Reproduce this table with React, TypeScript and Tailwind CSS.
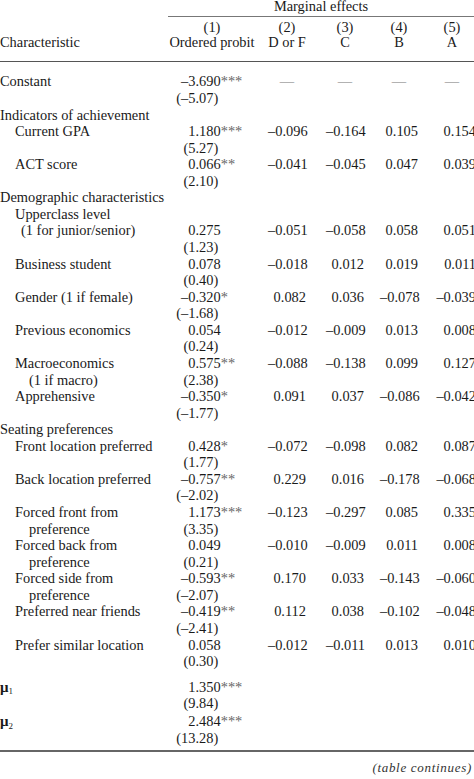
import React from 'react';

type Line = {
  label?: React.ReactNode;
  pad?: string;
  c1?: string;
  m?: string[];
  top?: string;
};

const L1 = 'pl-[15px]';
const L2 = 'pl-[29px]';

const lines: Line[] = [
  { label: 'Constant', c1: '–3.690***', m: ['—', '—', '—', '—'] },
  { c1: '(–5.07)' },
  { label: 'Indicators of achievement' },
  { label: 'Current GPA', pad: L1, c1: '1.180***', m: ['–0.096', '–0.164', '0.105', '0.154'] },
  { c1: '(5.27)' },
  { label: 'ACT score', pad: L1, c1: '0.066**', m: ['–0.041', '–0.045', '0.047', '0.039'] },
  { c1: '(2.10)' },
  { label: 'Demographic characteristics' },
  { label: 'Upperclass level', pad: L1 },
  { label: '(1 for junior/senior)', pad: 'pl-[21px]', c1: '0.275', m: ['–0.051', '–0.058', '0.058', '0.051'] },
  { c1: '(1.23)' },
  { label: 'Business student', pad: L1, c1: '0.078', m: ['–0.018', '0.012', '0.019', '0.011'] },
  { c1: '(0.40)' },
  { label: 'Gender (1 if female)', pad: L1, c1: '–0.320*', m: ['0.082', '0.036', '–0.078', '–0.039'] },
  { c1: '(–1.68)' },
  { label: 'Previous economics', pad: L1, c1: '0.054', m: ['–0.012', '–0.009', '0.013', '0.008'] },
  { c1: '(0.24)' },
  { label: 'Macroeconomics', pad: L1, c1: '0.575**', m: ['–0.088', '–0.138', '0.099', '0.127'] },
  { label: '(1 if macro)', pad: L2, c1: '(2.38)' },
  { label: 'Apprehensive', pad: L1, c1: '–0.350*', m: ['0.091', '0.037', '–0.086', '–0.042'] },
  { c1: '(–1.77)' },
  { label: 'Seating preferences' },
  { label: 'Front location preferred', pad: L1, c1: '0.428*', m: ['–0.072', '–0.098', '0.082', '0.087'] },
  { c1: '(1.77)' },
  { label: 'Back location preferred', pad: L1, c1: '–0.757**', m: ['0.229', '0.016', '–0.178', '–0.068'] },
  { c1: '(–2.02)' },
  { label: 'Forced front from', pad: L1, c1: '1.173***', m: ['–0.123', '–0.297', '0.085', '0.335'] },
  { label: 'preference', pad: L2, c1: '(3.35)' },
  { label: 'Forced back from', pad: L1, c1: '0.049', m: ['–0.010', '–0.009', '0.011', '0.008'] },
  { label: 'preference', pad: L2, c1: '(0.21)' },
  { label: 'Forced side from', pad: L1, c1: '–0.593**', m: ['0.170', '0.033', '–0.143', '–0.060'] },
  { label: 'preference', pad: L2, c1: '(–2.07)' },
  { label: 'Preferred near friends', pad: L1, c1: '–0.419**', m: ['0.112', '0.038', '–0.102', '–0.048'] },
  { c1: '(–2.41)' },
  { label: 'Prefer similar location', pad: L1, c1: '0.058', m: ['–0.012', '–0.011', '0.013', '0.010'] },
  { c1: '(0.30)' },
  {
    label: (
      <>
        <span className="font-bold text-[15px]">μ</span>
        <sub className="text-[9px]">1</sub>
      </>
    ),
    c1: '1.350***',
    top: 'mt-[9px]',
  },
  { c1: '(9.84)' },
  {
    label: (
      <>
        <span className="font-bold text-[15px]">μ</span>
        <sub className="text-[9px]">2</sub>
      </>
    ),
    c1: '2.484***',
    top: 'mt-[1.5px]',
  },
  { c1: '(13.28)' },
];

// column boxes for the four marginal-effect columns
const cols = ['ml-[12px] w-[38px]', 'ml-[20px] w-[38px]', 'ml-[16px] w-[38px]', 'ml-[10px] w-[48px]'];

const Coef = ({ v }: { v?: string }) => {
  if (!v) return null;
  const i = v.indexOf('.');
  const head = v.slice(0, i);
  const tail = v.slice(i);
  const stars = tail.replace(/[^*]/g, '');
  const body = tail.replace(/\*/g, '');
  return (
    <>
      <span className="inline-block w-[27.5px] text-right">{head}</span>
      <span>{body}</span>
      <span className="text-[#666]">{stars}</span>
    </>
  );
};

export default function App() {
  return (
    <div className="w-[474px] h-[779px] overflow-hidden bg-white text-[#1a1a1a] text-[14.4px] font-['Liberation_Serif','Times_New_Roman',serif]">
      <div className="w-[476px] -mt-[2.2px]">
        {/* header */}
        <div className="flex">
          <div className="w-[168px] shrink-0" />
          <div className="flex-1 flex flex-col">
            <div className="leading-[16.6px] text-center pr-[2px]">Marginal effects</div>
            <div className="mt-[1.6px] h-px bg-[#777]" />
          </div>
        </div>
        <div className="flex mt-[2.6px] leading-[15.5px]">
          <div className="w-[168px] shrink-0 flex flex-col justify-end">Characteristic</div>
          <div className="w-[88px] shrink-0 text-center flex flex-col">
            <span>(1)</span>
            <span className="whitespace-nowrap">Ordered probit</span>
          </div>
          {[
            ['(2)', 'D or F'],
            ['(3)', 'C'],
            ['(4)', 'B'],
            ['(5)', 'A'],
          ].map((h, k) => (
            <div key={k} className={`${cols[k]} shrink-0 text-center flex flex-col whitespace-nowrap`}>
              <span>{h[0]}</span>
              <span>{h[1]}</span>
            </div>
          ))}
        </div>
        <div className="mt-[10px] h-[1.5px] w-[474px] bg-[#555]" />

        {/* body */}
        <div className="mt-[11.3px]">
          {lines.map((ln, n) => (
            <div key={n} className={`flex h-[16.57px] leading-[16.57px] whitespace-nowrap ${ln.top ?? ''}`}>
              <div className={`w-[168px] shrink-0 ${ln.pad ?? ''}`}>{ln.label}</div>
              <div className="w-[88px] shrink-0">
                <Coef v={ln.c1} />
              </div>
              {ln.m &&
                ln.m.map((v, k) => (
                  <div
                    key={k}
                    className={`${cols[k]} shrink-0 ${v === '—' ? 'text-center text-[#777]' : 'text-right'}`}
                  >
                    {v}
                  </div>
                ))}
            </div>
          ))}
        </div>

        <div className="mt-[4px] h-[2px] w-[474px] bg-[#666]" />
        <div className="mt-[9px] w-[474px] pr-[2px] text-right italic text-[13px] leading-[14px] tracking-[0.7px] text-[#333]">
          (table continues)
        </div>
      </div>
    </div>
  );
}
